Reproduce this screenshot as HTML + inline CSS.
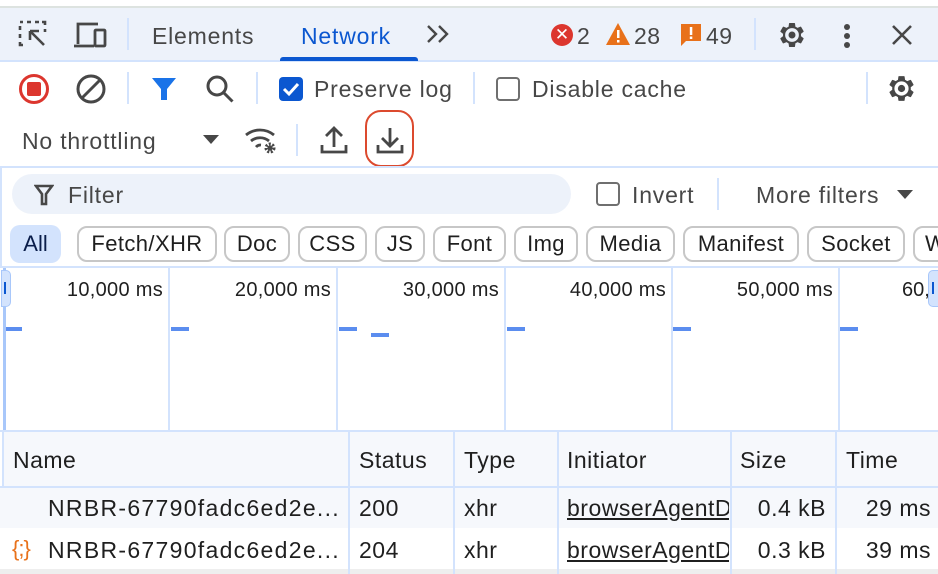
<!DOCTYPE html>
<html><head><meta charset="utf-8"><style>
*{box-sizing:border-box;margin:0;padding:0}
body{width:938px;height:574px;overflow:hidden;background:#fff;font-family:"Liberation Sans",sans-serif;color:#1f1f1f;position:relative}
.a{position:absolute}
.t{font-size:23px;white-space:nowrap;letter-spacing:0.5px}
.sep{position:absolute;width:2px;background:#d3e3fd}
.chip{position:absolute;top:226px;height:36px;border:2px solid #c7c7c7;border-radius:10px;font-size:22px;line-height:32px;white-space:nowrap;text-align:center;letter-spacing:0.4px}
.vl{position:absolute;width:2px;background:#d3e3fd}
.tick{position:absolute;height:4px;width:18px;background:#5b8def}
.lbl{position:absolute;top:279px;font-size:20px;text-align:right;width:150px;letter-spacing:0.3px}
</style></head><body>
<div class="a" style="left:0;top:6px;width:938px;height:2px;background:#dde3e0"></div>
<div class="a" style="left:0;top:8px;width:938px;height:53px;background:#edf2fa"></div>
<div class="a" style="left:0;top:60px;width:938px;height:2px;background:#d3e3fd"></div>
<div class="a" style="left:280px;top:57px;width:138px;height:4px;background:#0b57d0;border-radius:3px 3px 0 0"></div>
<svg class="a" style="left:18px;top:19px" width="32" height="32" viewBox="0 0 32 32" fill="none" stroke="#474747" stroke-width="2.6"><path d="M2 3h3M9 3h4M17 3h4M24 3h3v3M2 7v4M2 15v4M2 23v3h3M27 10v3M12 12l14 14M12 12v9M12 12h9"/></svg>
<svg class="a" style="left:73px;top:20px" width="36" height="30" viewBox="0 0 36 30" fill="none" stroke="#474747" stroke-width="2.8"><path d="M5 24V4h20M1 26h20"/><rect x="22" y="10" width="10" height="16" rx="1"/></svg>
<div class="sep" style="left:127px;top:18px;height:32px"></div>
<div class="a t" style="left:152px;top:23px;color:#474747;letter-spacing:0.8px">Elements</div>
<div class="a t" style="left:301px;top:23px;color:#0b57d0;letter-spacing:0.8px">Network</div>
<svg class="a" style="left:426px;top:24px" width="26" height="20" fill="none" stroke="#474747" stroke-width="2.4"><path d="M2 2l8 8-8 8M13 2l8 8-8 8"/></svg>
<div class="a" style="left:551px;top:24px;width:22px;height:22px;border-radius:50%;background:#dc362e;color:#fff;font-size:17px;line-height:22px;text-align:center">✕</div>
<div class="a t" style="left:577px;top:23px;color:#474747">2</div>
<svg class="a" style="left:605px;top:22px" width="26" height="24"><path d="M13 1L25 23H1z" fill="#e8711a"/><rect x="12" y="8" width="2.5" height="8" fill="#fff"/><rect x="12" y="18" width="2.5" height="2.5" fill="#fff"/></svg>
<div class="a t" style="left:634px;top:23px;color:#474747">28</div>
<svg class="a" style="left:680px;top:23px" width="22" height="24"><path d="M1 1h20v17H6l-5 5z" fill="#e8711a"/><rect x="9.8" y="4" width="2.5" height="8" fill="#fff"/><rect x="9.8" y="13.5" width="2.5" height="2.5" fill="#fff"/></svg>
<div class="a t" style="left:706px;top:23px;color:#474747">49</div>
<div class="sep" style="left:754px;top:18px;height:32px"></div>
<svg class="a" style="left:777px;top:20px" width="30" height="30" viewBox="0 0 24 24"><path fill="#474747" d="M19.14 12.94c.04-.3.06-.61.06-.94 0-.32-.02-.64-.07-.94l2.03-1.58a.49.49 0 0 0 .12-.61l-1.92-3.32a.488.488 0 0 0-.59-.22l-2.39.96c-.5-.38-1.03-.7-1.62-.94l-.36-2.54a.484.484 0 0 0-.48-.41h-3.840c-.24 0-.43.17-.47.41l-.36 2.54c-.59.24-1.13.57-1.62.94l-2.39-.96c-.22-.08-.47 0-.59.22L2.74 8.87c-.12.21-.08.47.12.61l2.03 1.58c-.05.3-.09.63-.09.94s.02.64.07.94l-2.03 1.58a.49.49 0 0 0-.12.61l1.92 3.32c.12.22.37.29.59.22l2.39-.96c.5.38 1.03.7 1.62.94l.36 2.54c.05.24.24.41.48.41h3.84c.24 0 .44-.17.47-.41l.36-2.54c.59-.24 1.13-.56 1.62-.94l2.39.96c.22.08.47 0 .59-.22l1.92-3.32c.12-.22.07-.47-.12-.61l-2.01-1.58zM12 17.5A5.5 5.5 0 1 1 12 6.5a5.5 5.5 0 0 1 0 11z"/><circle cx="12" cy="12" r="2.8" fill="#474747"/></svg>
<div class="a" style="left:844px;top:24px;width:6px;height:6px;border-radius:50%;background:#474747;box-shadow:0 9px 0 #474747,0 18px 0 #474747"></div>
<svg class="a" style="left:891px;top:24px" width="22" height="22" stroke="#474747" stroke-width="2.6"><path d="M2 2l18 18M20 2L2 20"/></svg>

<div class="a" style="left:19px;top:74px;width:30px;height:30px;border-radius:50%;border:3px solid #dc362e"></div>
<div class="a" style="left:27px;top:82px;width:14px;height:14px;background:#dc362e;border-radius:2px"></div>
<svg class="a" style="left:75px;top:73px" width="32" height="32" fill="none" stroke="#474747" stroke-width="3"><circle cx="16" cy="16" r="13"/><path d="M7 25L25 7"/></svg>
<div class="sep" style="left:127px;top:72px;height:32px"></div>
<svg class="a" style="left:151px;top:76px" width="26" height="26"><path d="M1 2h24l-9 11v11h-6V13z" fill="#1a73e8"/></svg>
<svg class="a" style="left:205px;top:74px" width="30" height="30" fill="none" stroke="#474747" stroke-width="3"><circle cx="12" cy="12" r="9"/><path d="M18.5 18.5l9 9"/></svg>
<div class="sep" style="left:256px;top:72px;height:32px"></div>
<div class="a" style="left:279px;top:77px;width:24px;height:24px;border-radius:4px;background:#0b57d0"></div>
<svg class="a" style="left:279px;top:77px" width="24" height="24" fill="none" stroke="#fff" stroke-width="3"><path d="M5 12l5 5 9-10"/></svg>
<div class="a t" style="left:314px;top:76px;color:#474747;letter-spacing:0.8px">Preserve log</div>
<div class="sep" style="left:473px;top:72px;height:32px"></div>
<div class="a" style="left:496px;top:77px;width:24px;height:24px;border-radius:4px;border:2px solid #6f6f6f"></div>
<div class="a t" style="left:532px;top:76px;color:#474747;letter-spacing:0.8px">Disable cache</div>
<div class="sep" style="left:866px;top:72px;height:32px"></div>
<svg class="a" style="left:886px;top:73px" width="31" height="31" viewBox="0 0 24 24"><path fill="#474747" d="M19.14 12.94c.04-.3.06-.61.06-.94 0-.32-.02-.64-.07-.94l2.03-1.58a.49.49 0 0 0 .12-.61l-1.92-3.32a.488.488 0 0 0-.59-.22l-2.39.96c-.5-.38-1.03-.7-1.62-.94l-.36-2.54a.484.484 0 0 0-.48-.41h-3.84c-.24 0-.43.17-.47.41l-.36 2.54c-.59.24-1.13.57-1.62.94l-2.39-.96c-.22-.08-.47 0-.59.22L2.74 8.87c-.12.21-.08.47.12.61l2.03 1.58c-.05.3-.09.63-.09.94s.02.64.07.94l-2.03 1.58a.49.49 0 0 0-.12.61l1.92 3.32c.12.22.37.29.59.22l2.39-.96c.5.38 1.03.7 1.62.94l.36 2.54c.05.24.24.41.48.41h3.84c.24 0 .44-.17.47-.41l.36-2.54c.59-.24 1.13-.56 1.62-.94l2.39.96c.22.08.47 0 .59-.22l1.92-3.32c.12-.22.07-.47-.12-.61l-2.01-1.58zM12 17.5A5.5 5.5 0 1 1 12 6.5a5.5 5.5 0 0 1 0 11z"/><circle cx="12" cy="12" r="2.8" fill="#474747"/></svg>

<div class="a t" style="left:22px;top:128px;color:#474747;letter-spacing:0.8px">No throttling</div>
<svg class="a" style="left:203px;top:135px" width="16" height="10"><path d="M0 0h16L8 9z" fill="#474747"/></svg>
<svg class="a" style="left:244px;top:125px" width="36" height="30" fill="none" stroke="#474747" stroke-width="2.8"><path d="M2 10a22 22 0 0 1 28 0M7 16a14 14 0 0 1 18 0M12 22a6 6 0 0 1 5-2"/><circle cx="26" cy="23" r="4" stroke-width="3" stroke-dasharray="2 1.5"/><circle cx="26" cy="23" r="1.2" fill="#474747"/></svg>
<div class="sep" style="left:296px;top:124px;height:32px"></div>
<svg class="a" style="left:320px;top:125px" width="28" height="30" fill="none" stroke="#474747" stroke-width="2.8"><path d="M14 22V4M6 11l8-8 8 8M2 20v7h24v-7"/></svg>
<svg class="a" style="left:376px;top:125px" width="28" height="30" fill="none" stroke="#474747" stroke-width="2.8"><path d="M14 3v18M6 13l8 8 8-8M2 20v7h24v-7"/></svg>
<div class="a" style="left:365px;top:110px;width:49px;height:57px;border:2px solid #dc4a2e;border-radius:16px"></div>
<div class="a" style="left:0;top:166px;width:938px;height:2px;background:#d3e3fd"></div>

<div class="a" style="left:12px;top:174px;width:559px;height:40px;border-radius:20px;background:#edf2fa"></div>
<svg class="a" style="left:34px;top:184px" width="20" height="22" fill="none" stroke="#474747" stroke-width="2.6"><path d="M2 2h16l-6 8v10h-4V10z"/></svg>
<div class="a t" style="left:68px;top:182px;color:#474747;letter-spacing:0.8px">Filter</div>
<div class="a" style="left:596px;top:182px;width:24px;height:24px;border-radius:4px;border:2px solid #6f6f6f"></div>
<div class="a t" style="left:632px;top:182px;color:#474747;letter-spacing:0.8px">Invert</div>
<div class="sep" style="left:717px;top:178px;height:32px"></div>
<div class="a t" style="left:756px;top:182px;color:#474747;letter-spacing:0.8px">More filters</div>
<svg class="a" style="left:897px;top:190px" width="16" height="10"><path d="M0 0h16L8 9z" fill="#474747"/></svg>

<div class="a" style="left:10px;top:225px;width:51px;height:38px;border-radius:10px;background:#d3e3fd;color:#0a1d4a;font-size:22px;line-height:38px;text-align:center">All</div>
<div class="chip" style="left:77px;width:140px">Fetch/XHR</div>
<div class="chip" style="left:224px;width:66px">Doc</div>
<div class="chip" style="left:298px;width:69px">CSS</div>
<div class="chip" style="left:375px;width:50px">JS</div>
<div class="chip" style="left:433px;width:73px">Font</div>
<div class="chip" style="left:514px;width:64px">Img</div>
<div class="chip" style="left:586px;width:89px">Media</div>
<div class="chip" style="left:683px;width:116px">Manifest</div>
<div class="chip" style="left:807px;width:98px">Socket</div>
<div class="chip" style="left:913px;width:60px;text-align:left;padding-left:10px">W</div>
<div class="a" style="left:0;top:266px;width:938px;height:2px;background:#d3e3fd"></div>
<div class="a" style="left:0;top:166px;width:2px;height:102px;background:#d3e3fd"></div>

<div class="vl" style="left:3px;top:268px;height:162px;width:3px;background:#a8c7fa"></div>
<div class="a" style="left:1px;top:270px;width:10px;height:37px;border-radius:0 5px 5px 0;background:#d3e3fd;border:1px solid #a8c7fa"></div>
<div class="a" style="left:4px;top:282px;width:2px;height:12px;background:#0b57d0"></div>
<div class="vl" style="left:168px;top:268px;height:162px"></div>
<div class="vl" style="left:336px;top:268px;height:162px"></div>
<div class="vl" style="left:504px;top:268px;height:162px"></div>
<div class="vl" style="left:671px;top:268px;height:162px"></div>
<div class="vl" style="left:838px;top:268px;height:162px"></div>
<div class="lbl" style="left:13px">10,000 ms</div>
<div class="lbl" style="left:181px">20,000 ms</div>
<div class="lbl" style="left:349px">30,000 ms</div>
<div class="lbl" style="left:516px">40,000 ms</div>
<div class="lbl" style="left:683px">50,000 ms</div>
<div class="a" style="left:902px;top:279px;font-size:20px">60,</div>
<div class="a" style="left:928px;top:270px;width:12px;height:37px;border-radius:5px 0 0 5px;background:#d3e3fd;border:1px solid #a8c7fa"></div>
<div class="a" style="left:932px;top:282px;width:2px;height:12px;background:#0b57d0"></div>
<div class="tick" style="left:6px;top:327px;width:16px"></div>
<div class="tick" style="left:171px;top:327px"></div>
<div class="tick" style="left:339px;top:327px"></div>
<div class="tick" style="left:371px;top:333px"></div>
<div class="tick" style="left:507px;top:327px"></div>
<div class="tick" style="left:673px;top:327px"></div>
<div class="tick" style="left:840px;top:327px"></div>

<div class="a" style="left:0;top:430px;width:938px;height:2px;background:#d3e3fd"></div>
<div class="a" style="left:2px;top:432px;width:936px;height:54px;background:#f6f8fc"></div>
<div class="a" style="left:0;top:486px;width:938px;height:2px;background:#d3e3fd"></div>
<div class="a" style="left:0;top:488px;width:938px;height:40px;background:#f6f8fc"></div>
<div class="a" style="left:0;top:569px;width:938px;height:5px;background:#eeeeee"></div>
<div class="a" style="left:2px;top:432px;width:2px;height:56px;background:#d3e3fd"></div>
<div class="vl" style="left:348px;top:432px;height:142px"></div>
<div class="vl" style="left:453px;top:432px;height:142px"></div>
<div class="vl" style="left:557px;top:432px;height:142px"></div>
<div class="vl" style="left:730px;top:432px;height:142px"></div>
<div class="vl" style="left:835px;top:432px;height:142px"></div>
<div class="a t" style="left:13px;top:447px">Name</div>
<div class="a t" style="left:359px;top:447px">Status</div>
<div class="a t" style="left:464px;top:447px">Type</div>
<div class="a t" style="left:567px;top:447px">Initiator</div>
<div class="a t" style="left:740px;top:447px">Size</div>
<div class="a t" style="left:846px;top:447px">Time</div>

<div class="a t" style="left:48px;top:495px;letter-spacing:1.3px">NRBR-67790fadc6ed2e...</div>
<div class="a t" style="left:359px;top:495px">200</div>
<div class="a t" style="left:464px;top:495px">xhr</div>
<div class="a t" style="left:567px;top:495px;text-decoration:underline;width:162px;overflow:hidden">browserAgentD</div>
<div class="a t" style="left:740px;top:495px;width:86px;text-align:right">0.4 kB</div>
<div class="a t" style="left:846px;top:495px;width:85px;text-align:right">29 ms</div>

<div class="a" style="left:12px;top:536px;font-size:22px;color:#e8711a;letter-spacing:-1px">{;}</div>
<div class="a t" style="left:48px;top:537px;letter-spacing:1.3px">NRBR-67790fadc6ed2e...</div>
<div class="a t" style="left:359px;top:537px">204</div>
<div class="a t" style="left:464px;top:537px">xhr</div>
<div class="a t" style="left:567px;top:537px;text-decoration:underline;width:162px;overflow:hidden">browserAgentD</div>
<div class="a t" style="left:740px;top:537px;width:86px;text-align:right">0.3 kB</div>
<div class="a t" style="left:846px;top:537px;width:85px;text-align:right">39 ms</div>
</body></html>
